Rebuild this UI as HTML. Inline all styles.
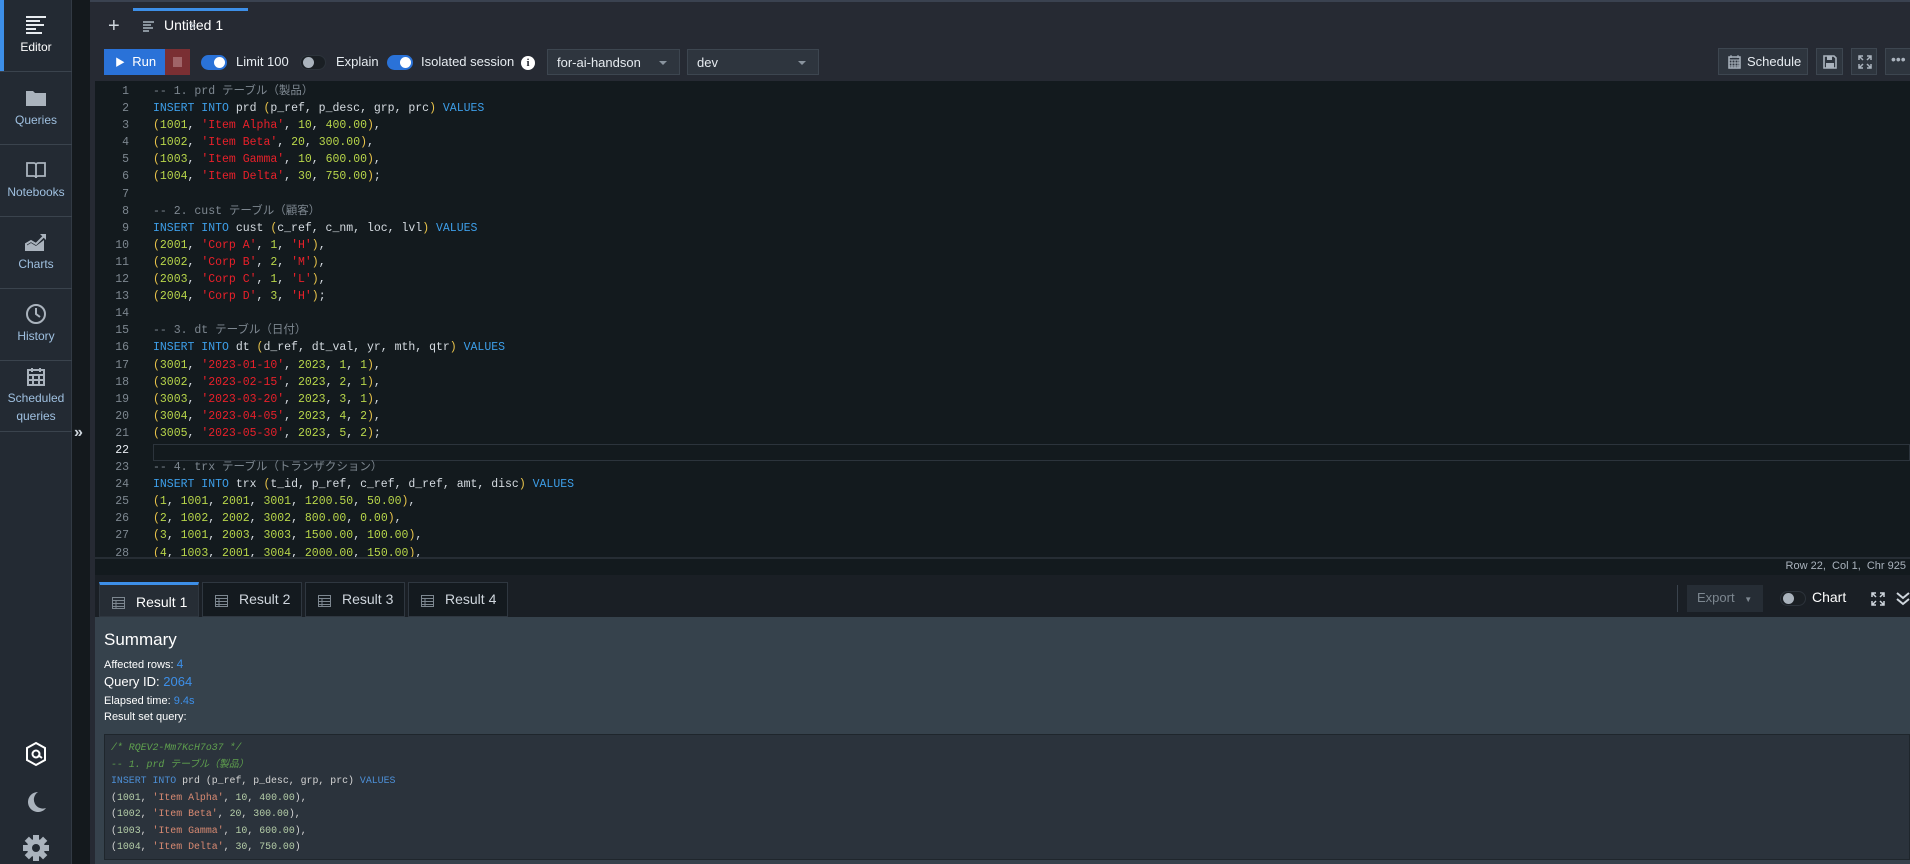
<!DOCTYPE html>
<html><head><meta charset="utf-8">
<style>
*{box-sizing:border-box;margin:0;padding:0}
body{width:1910px;height:864px;overflow:hidden;background:#262a33;font-family:"Liberation Sans","Noto Sans CJK JP",sans-serif;color:#d5dbe1;position:relative}
.a{position:absolute}
#side{left:0;top:0;width:72px;height:864px;background:#232a33;border-right:1px solid #323a44}
.nav{position:absolute;left:0;width:72px;height:72px;border-bottom:1px solid #3a434d;text-align:center;font-size:12px;color:#9fc0e0}
.nav svg{display:block;margin:0 auto}
#strip{left:72px;top:0;width:18px;height:864px;background:#14191d}
#top{left:90px;top:0;width:1820px;height:81px;background:#262a33;border-top:2px solid #3a4250}
.tog{position:absolute;width:26px;height:15px;border-radius:8px;background:#2a72d8}
.tog::after{content:"";position:absolute;right:2px;top:2px;width:11px;height:11px;border-radius:50%;background:#fff}
.tog.off{background:#1a1f24;border:1px solid #2c333b}
.tog.off::after{left:2px;right:auto;top:1px;background:#aab3bd}
.lbl{position:absolute;font-size:13px;color:#e6ebf0;top:54px}
.dd{position:absolute;top:49px;height:26px;background:#2e353e;border:1px solid #3d4650;font-size:13px;color:#e6ebf0;padding:5px 9px}
.dd::after{content:"";position:absolute;right:12px;top:11px;border-left:4px solid transparent;border-right:4px solid transparent;border-top:4px solid #8a949e}
.btn{position:absolute;top:48px;height:27px;background:#2e353e;border:1px solid #3d4650}
#ed{left:95px;top:81px;width:1815px;height:476px;background:#131a1e;overflow:hidden}
#code{position:absolute;left:0;top:2px;font-family:"Liberation Mono","Noto Sans CJK JP",monospace;font-size:11.5px;line-height:17.1px;white-space:pre}
.ln{display:inline-block;width:34px;text-align:right;color:#7d8790;margin-right:24px}
.c{color:#7d8790}.k{color:#3d9ee8}.s{color:#e8202a}.n{color:#b8d64a}.p{color:#e8c34a}.t{color:#d5dbe1}
#hl{position:absolute;left:58px;top:363px;width:1757px;height:17px;border:1px solid #2c343c}
#status{left:95px;top:557px;width:1815px;height:18px;background:#131a1e;border-top:2px solid #262d34;font-size:11px;color:#aab3bd;text-align:right;padding:1px 4px 0 0}
#rbar{left:95px;top:575px;width:1815px;height:42px;background:#1a1f25}
.rt{position:absolute;top:7px;height:35px;width:100px;background:#141a1f;border:1px solid #2f3740;font-size:14px;color:#cfd6dd;padding:8px 0 0 36px}
.rt svg{position:absolute;left:12px;top:12px}
#res{left:95px;top:617px;width:1815px;height:247px;background:#36424c}
#qbox{left:104px;top:734px;width:1806px;height:126px;background:#2b333c;border:1px solid #1f262c;font-family:"Liberation Mono","Noto Sans CJK JP",monospace;font-size:9.9px;line-height:16.5px;white-space:pre;padding:5px 0 0 6px;color:#d4d4d4}
.g{color:#5fa04e;font-style:italic}.k2{color:#4d90d8}.s2{color:#d98a72}.n2{color:#b5cea8}
</style></head><body>
<div id="side" class="a">
 <div class="a" style="left:0;top:0;width:4px;height:72px;background:#3d8fe8"></div>
 <div class="nav" style="top:0;color:#fff;padding-top:14px"><svg width="22" height="20" viewBox="0 0 22 20"><g fill="#e8ecf0"><rect x="1" y="2" width="20" height="2"/><rect x="1" y="6" width="14" height="2"/><rect x="1" y="10" width="18" height="2"/><rect x="1" y="14" width="10" height="2"/><rect x="1" y="18" width="16" height="2"/></g></svg><div style="margin-top:6px">Editor</div></div>
 <div class="nav" style="top:73px;padding-top:15px"><svg width="22" height="20" viewBox="0 0 22 20"><path d="M1 3h7l2 2h11v13H1z" fill="#aab3bd"/></svg><div style="margin-top:5px">Queries</div></div>
 <div class="nav" style="top:145px;padding-top:15px"><svg width="22" height="20" viewBox="0 0 22 20"><path d="M2 3h7c1 0 2 1 2 2v13c0-1-1-2-2-2H2zM20 3h-7c-1 0-2 1-2 2v13c0-1 1-2 2-2h7z" fill="none" stroke="#aab3bd" stroke-width="1.8"/></svg><div style="margin-top:5px">Notebooks</div></div>
 <div class="nav" style="top:217px;padding-top:15px"><svg width="22" height="20" viewBox="0 0 22 20"><path d="M1 19V12l5-3 5 3 8-8" fill="none" stroke="#aab3bd" stroke-width="2"/><path d="M15 2h6v6z" fill="#aab3bd"/><path d="M1 14l5-3 5 3 8-6v11H1z" fill="#aab3bd"/></svg><div style="margin-top:5px">Charts</div></div>
 <div class="nav" style="top:289px;padding-top:14px"><svg width="22" height="22" viewBox="0 0 22 22"><circle cx="11" cy="11" r="9" fill="none" stroke="#aab3bd" stroke-width="2"/><path d="M11 5v6l4 3" fill="none" stroke="#aab3bd" stroke-width="2"/></svg><div style="margin-top:4px">History</div></div>
 <div class="nav" style="top:361px;height:71px;padding-top:6px;line-height:18px"><svg width="20" height="20" viewBox="0 0 20 20"><rect x="2" y="3" width="16" height="15" fill="none" stroke="#aab3bd" stroke-width="2"/><path d="M2 8h16M7 8v10M13 8v10M2 13h16M6 1v4M14 1v4" stroke="#aab3bd" stroke-width="2"/></svg><div style="margin-top:2px">Scheduled<br>queries</div></div>
 <svg class="a" style="left:22px;top:740px" width="28" height="28" viewBox="0 0 28 28"><path d="M14 3l9 5v12l-9 5-9-5V8z" fill="none" stroke="#fff" stroke-width="2"/><circle cx="14" cy="14" r="3.5" fill="none" stroke="#fff" stroke-width="2"/><path d="M16 15l4 3" stroke="#fff" stroke-width="2"/></svg>
 <svg class="a" style="left:25px;top:790px" width="22" height="24" viewBox="0 0 22 24"><path d="M13 2a10 10 0 1 0 8 16A9 9 0 0 1 13 2z" fill="#aab3bd"/></svg>
 <svg class="a" style="left:22px;top:834px" width="28" height="28" viewBox="0 0 28 28"><g fill="#aab3bd"><circle cx="14" cy="14" r="9"/><rect x="11" y="1" width="6" height="26"/><rect x="1" y="11" width="26" height="6"/><rect x="11" y="1" width="6" height="26" transform="rotate(45 14 14)"/><rect x="11" y="1" width="6" height="26" transform="rotate(-45 14 14)"/></g><circle cx="14" cy="14" r="4" fill="#232a33"/></svg>
</div>
<div id="strip" class="a"><div class="a" style="left:2px;top:424px;color:#cfd6dd;font-size:16px;font-weight:bold">»</div></div>
<div id="top" class="a">
 <div class="a" style="left:43px;top:6px;width:115px;height:3px;background:#3d8fe8"></div>
 <div class="a" style="left:18px;top:13px;font-size:20px;color:#cfd6dd">+</div>
 <svg class="a" style="left:53px;top:19px" width="11" height="11" viewBox="0 0 11 11"><g fill="#8a949e"><rect y="0" width="11" height="2"/><rect y="3" width="8" height="2"/><rect y="6" width="10" height="2"/><rect y="9" width="6" height="2"/></g></svg>
 <div class="a" style="left:74px;top:15px;font-size:14px;color:#fff">Untitled 1</div>
 <div class="a" style="left:99px;top:16px;font-size:13px;color:#aab3bd">×</div>
 <div class="a" style="left:14px;top:47px;width:61px;height:26px;background:#2a72d8;color:#fff;font-size:13px;padding:5px 0 0 11px"><span style="font-size:10px">▶</span>&nbsp; Run</div>
 <div class="a" style="left:75px;top:47px;width:25px;height:26px;background:#7a2f33"><div class="a" style="left:8px;top:8px;width:9px;height:10px;background:#a06468"></div></div>
 <div class="tog" style="left:111px;top:53px"></div><div class="lbl" style="left:146px;top:52px">Limit 100</div>
 <div class="tog off" style="left:210px;top:53px"></div><div class="lbl" style="left:246px;top:52px">Explain</div>
 <div class="tog" style="left:297px;top:53px"></div><div class="lbl" style="left:331px;top:52px">Isolated session</div>
 <div class="a" style="left:431px;top:54px;width:14px;height:14px;border-radius:50%;background:#fff;color:#262a33;font-size:11px;font-weight:bold;text-align:center;line-height:14px;font-family:'Liberation Serif',serif">i</div>
</div>
<div class="dd" style="left:547px;width:133px">for-ai-handson</div>
<div class="dd" style="left:687px;width:132px">dev</div>
<div class="btn" style="left:1718px;width:90px;font-size:13px;color:#e6ebf0;padding:5px 0 0 28px"><svg class="a" style="left:9px;top:6px" width="13" height="14" viewBox="0 0 13 14"><rect x="1" y="2" width="11" height="11" fill="none" stroke="#aab3bd" stroke-width="1.5"/><path d="M1 5h11M4 5v8M7 5v8M10 5v8M1 8h11M1 11h11M3 0v3M10 0v3" stroke="#aab3bd"/></svg>Schedule</div>
<div class="btn" style="left:1816px;width:27px"><svg class="a" style="left:6px;top:6px" width="14" height="14" viewBox="0 0 14 14"><path d="M1 1h10l2 2v10H1z" fill="none" stroke="#aab3bd" stroke-width="1.6"/><rect x="4" y="1" width="5" height="4" fill="#aab3bd"/><rect x="3" y="8" width="8" height="5" fill="#aab3bd"/></svg></div>
<div class="btn" style="left:1851px;width:26px"><svg class="a" style="left:6px;top:6px" width="14" height="14" viewBox="0 0 14 14"><path d="M1 5V1h4M9 1h4v4M13 9v4H9M5 13H1V9M1 1l4 4M13 1L9 5M13 13L9 9M1 13l4-4" fill="none" stroke="#aab3bd" stroke-width="1.5"/></svg></div>
<div class="btn" style="left:1885px;width:30px;color:#aab3bd;font-size:14px;padding:2px 0 0 5px">•••</div>
<div id="ed" class="a">
<div id="hl"></div>
<div id="code"><span class="ln">1</span><span class="c">-- 1. prd テーブル（製品）</span>
<span class="ln">2</span><span class="k">INSERT INTO</span> <span class="t">prd</span> <span class="p">(</span><span class="t">p_ref, p_desc, grp, prc</span><span class="p">)</span> <span class="k">VALUES</span>
<span class="ln">3</span><span class="p">(</span><span class="n">1001</span><span class="t">, </span><span class="s">'Item Alpha'</span><span class="t">, </span><span class="n">10</span><span class="t">, </span><span class="n">400.00</span><span class="p">)</span><span class="t">,</span>
<span class="ln">4</span><span class="p">(</span><span class="n">1002</span><span class="t">, </span><span class="s">'Item Beta'</span><span class="t">, </span><span class="n">20</span><span class="t">, </span><span class="n">300.00</span><span class="p">)</span><span class="t">,</span>
<span class="ln">5</span><span class="p">(</span><span class="n">1003</span><span class="t">, </span><span class="s">'Item Gamma'</span><span class="t">, </span><span class="n">10</span><span class="t">, </span><span class="n">600.00</span><span class="p">)</span><span class="t">,</span>
<span class="ln">6</span><span class="p">(</span><span class="n">1004</span><span class="t">, </span><span class="s">'Item Delta'</span><span class="t">, </span><span class="n">30</span><span class="t">, </span><span class="n">750.00</span><span class="p">)</span><span class="t">;</span>
<span class="ln">7</span>
<span class="ln">8</span><span class="c">-- 2. cust テーブル（顧客）</span>
<span class="ln">9</span><span class="k">INSERT INTO</span> <span class="t">cust</span> <span class="p">(</span><span class="t">c_ref, c_nm, loc, lvl</span><span class="p">)</span> <span class="k">VALUES</span>
<span class="ln">10</span><span class="p">(</span><span class="n">2001</span><span class="t">, </span><span class="s">'Corp A'</span><span class="t">, </span><span class="n">1</span><span class="t">, </span><span class="s">'H'</span><span class="p">)</span><span class="t">,</span>
<span class="ln">11</span><span class="p">(</span><span class="n">2002</span><span class="t">, </span><span class="s">'Corp B'</span><span class="t">, </span><span class="n">2</span><span class="t">, </span><span class="s">'M'</span><span class="p">)</span><span class="t">,</span>
<span class="ln">12</span><span class="p">(</span><span class="n">2003</span><span class="t">, </span><span class="s">'Corp C'</span><span class="t">, </span><span class="n">1</span><span class="t">, </span><span class="s">'L'</span><span class="p">)</span><span class="t">,</span>
<span class="ln">13</span><span class="p">(</span><span class="n">2004</span><span class="t">, </span><span class="s">'Corp D'</span><span class="t">, </span><span class="n">3</span><span class="t">, </span><span class="s">'H'</span><span class="p">)</span><span class="t">;</span>
<span class="ln">14</span>
<span class="ln">15</span><span class="c">-- 3. dt テーブル（日付）</span>
<span class="ln">16</span><span class="k">INSERT INTO</span> <span class="t">dt</span> <span class="p">(</span><span class="t">d_ref, dt_val, yr, mth, qtr</span><span class="p">)</span> <span class="k">VALUES</span>
<span class="ln">17</span><span class="p">(</span><span class="n">3001</span><span class="t">, </span><span class="s">'2023-01-10'</span><span class="t">, </span><span class="n">2023</span><span class="t">, </span><span class="n">1</span><span class="t">, </span><span class="n">1</span><span class="p">)</span><span class="t">,</span>
<span class="ln">18</span><span class="p">(</span><span class="n">3002</span><span class="t">, </span><span class="s">'2023-02-15'</span><span class="t">, </span><span class="n">2023</span><span class="t">, </span><span class="n">2</span><span class="t">, </span><span class="n">1</span><span class="p">)</span><span class="t">,</span>
<span class="ln">19</span><span class="p">(</span><span class="n">3003</span><span class="t">, </span><span class="s">'2023-03-20'</span><span class="t">, </span><span class="n">2023</span><span class="t">, </span><span class="n">3</span><span class="t">, </span><span class="n">1</span><span class="p">)</span><span class="t">,</span>
<span class="ln">20</span><span class="p">(</span><span class="n">3004</span><span class="t">, </span><span class="s">'2023-04-05'</span><span class="t">, </span><span class="n">2023</span><span class="t">, </span><span class="n">4</span><span class="t">, </span><span class="n">2</span><span class="p">)</span><span class="t">,</span>
<span class="ln">21</span><span class="p">(</span><span class="n">3005</span><span class="t">, </span><span class="s">'2023-05-30'</span><span class="t">, </span><span class="n">2023</span><span class="t">, </span><span class="n">5</span><span class="t">, </span><span class="n">2</span><span class="p">)</span><span class="t">;</span>
<span class="ln" style="color:#e6ebf0">22</span>
<span class="ln">23</span><span class="c">-- 4. trx テーブル（トランザクション）</span>
<span class="ln">24</span><span class="k">INSERT INTO</span> <span class="t">trx</span> <span class="p">(</span><span class="t">t_id, p_ref, c_ref, d_ref, amt, disc</span><span class="p">)</span> <span class="k">VALUES</span>
<span class="ln">25</span><span class="p">(</span><span class="n">1</span><span class="t">, </span><span class="n">1001</span><span class="t">, </span><span class="n">2001</span><span class="t">, </span><span class="n">3001</span><span class="t">, </span><span class="n">1200.50</span><span class="t">, </span><span class="n">50.00</span><span class="p">)</span><span class="t">,</span>
<span class="ln">26</span><span class="p">(</span><span class="n">2</span><span class="t">, </span><span class="n">1002</span><span class="t">, </span><span class="n">2002</span><span class="t">, </span><span class="n">3002</span><span class="t">, </span><span class="n">800.00</span><span class="t">, </span><span class="n">0.00</span><span class="p">)</span><span class="t">,</span>
<span class="ln">27</span><span class="p">(</span><span class="n">3</span><span class="t">, </span><span class="n">1001</span><span class="t">, </span><span class="n">2003</span><span class="t">, </span><span class="n">3003</span><span class="t">, </span><span class="n">1500.00</span><span class="t">, </span><span class="n">100.00</span><span class="p">)</span><span class="t">,</span>
<span class="ln">28</span><span class="p">(</span><span class="n">4</span><span class="t">, </span><span class="n">1003</span><span class="t">, </span><span class="n">2001</span><span class="t">, </span><span class="n">3004</span><span class="t">, </span><span class="n">2000.00</span><span class="t">, </span><span class="n">150.00</span><span class="p">)</span><span class="t">,</span></div>
</div>
<div id="status" class="a">Row 22,&nbsp; Col 1,&nbsp; Chr 925</div>
<div id="rbar" class="a">
 <div class="rt" style="left:4px;background:#262d35;border-top:3px solid #3d8fe8;padding-top:9px;color:#fff"><svg width="13" height="12" viewBox="0 0 13 12"><rect x="0.5" y="0.5" width="12" height="11" fill="none" stroke="#7d8790"/><path d="M0 3.5h13M0 6.5h13M0 9.5h13M4 3v9" stroke="#7d8790"/></svg>Result 1</div>
 <div class="rt" style="left:107px"><svg width="13" height="12" viewBox="0 0 13 12"><rect x="0.5" y="0.5" width="12" height="11" fill="none" stroke="#7d8790"/><path d="M0 3.5h13M0 6.5h13M0 9.5h13M4 3v9" stroke="#7d8790"/></svg>Result 2</div>
 <div class="rt" style="left:210px"><svg width="13" height="12" viewBox="0 0 13 12"><rect x="0.5" y="0.5" width="12" height="11" fill="none" stroke="#7d8790"/><path d="M0 3.5h13M0 6.5h13M0 9.5h13M4 3v9" stroke="#7d8790"/></svg>Result 3</div>
 <div class="rt" style="left:313px"><svg width="13" height="12" viewBox="0 0 13 12"><rect x="0.5" y="0.5" width="12" height="11" fill="none" stroke="#7d8790"/><path d="M0 3.5h13M0 6.5h13M0 9.5h13M4 3v9" stroke="#7d8790"/></svg>Result 4</div>
 <div class="a" style="left:1582px;top:10px;width:1px;height:27px;background:#3a434d"></div>
 <div class="a" style="left:1592px;top:10px;width:76px;height:27px;background:#262d35;color:#7d8790;font-size:13px;padding:5px 0 0 10px">Export <span style="font-size:8px;margin-left:6px">▼</span></div>
 <div class="tog off" style="left:1685px;top:16px"></div>
 <div class="a" style="left:1717px;top:14px;font-size:14px;color:#fff">Chart</div>
 <svg class="a" style="left:1776px;top:17px" width="14" height="14" viewBox="0 0 14 14"><path d="M1 5V1h4M9 1h4v4M13 9v4H9M5 13H1V9M1 1l4 4M13 1L9 5M13 13L9 9M1 13l4-4" fill="none" stroke="#cfd6dd" stroke-width="1.5"/></svg>
 <svg class="a" style="left:1801px;top:16px" width="14" height="16" viewBox="0 0 14 16"><path d="M1 2l6 5 6-5M1 8l6 5 6-5" fill="none" stroke="#cfd6dd" stroke-width="2"/></svg>
</div>
<div id="res" class="a">
 <div class="a" style="left:9px;top:13px;font-size:17px;color:#fff">Summary</div>
 <div class="a" style="left:9px;top:40px;font-size:11px;color:#fff">Affected rows: <span style="color:#3d8fe8;font-size:12px">4</span></div>
 <div class="a" style="left:9px;top:57px;font-size:13px;color:#fff">Query ID: <span style="color:#3d8fe8">2064</span></div>
 <div class="a" style="left:9px;top:78px;font-size:11px;color:#fff">Elapsed time: <span style="color:#3d8fe8">9.4s</span></div>
 <div class="a" style="left:9px;top:94px;font-size:11px;color:#fff">Result set query:</div>
</div>
<div id="qbox" class="a"><span class="g">/* RQEV2-Mm7KcH7o37 */</span>
<span class="g">-- 1. prd テーブル（製品）</span>
<span class="k2">INSERT INTO</span> prd (p_ref, p_desc, grp, prc) <span class="k2">VALUES</span>
(<span class="n2">1001</span>, <span class="s2">'Item Alpha'</span>, <span class="n2">10</span>, <span class="n2">400.00</span>),
(<span class="n2">1002</span>, <span class="s2">'Item Beta'</span>, <span class="n2">20</span>, <span class="n2">300.00</span>),
(<span class="n2">1003</span>, <span class="s2">'Item Gamma'</span>, <span class="n2">10</span>, <span class="n2">600.00</span>),
(<span class="n2">1004</span>, <span class="s2">'Item Delta'</span>, <span class="n2">30</span>, <span class="n2">750.00</span>)</div>
</body></html>
